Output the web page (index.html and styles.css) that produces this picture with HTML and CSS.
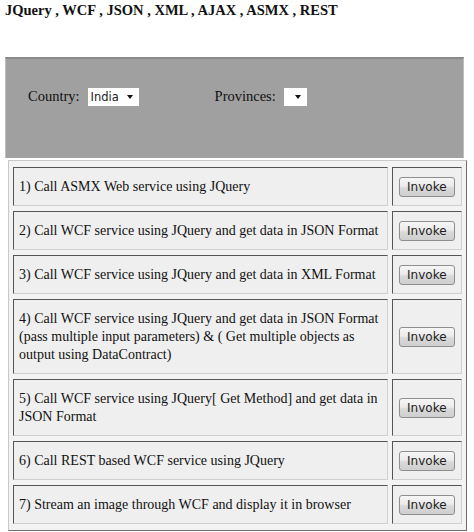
FILE: index.html
```html
<!DOCTYPE html>
<html>
<head>
<meta charset="utf-8">
<link rel="stylesheet" href="styles.css">
</head>
<body>
<h1 class="title">JQuery , WCF , JSON , XML , AJAX , ASMX , REST</h1>
<div class="panel">
  <div class="field">
    <span class="label">Country:</span>
    <span class="select select-country">India <span class="arrow"></span></span>
  </div>
  <div class="field">
    <span class="label">Provinces:</span>
    <span class="select select-prov"><span class="arrow"></span></span>
  </div>
</div>
<table class="services">
  <tr><td class="desc">1) Call ASMX Web service using JQuery</td><td class="act"><span class="btn">Invoke</span></td></tr>
  <tr><td class="desc">2) Call WCF service using JQuery and get data in JSON Format</td><td class="act"><span class="btn">Invoke</span></td></tr>
  <tr><td class="desc">3) Call WCF service using JQuery and get data in XML Format</td><td class="act"><span class="btn">Invoke</span></td></tr>
  <tr><td class="desc">4) Call WCF service using JQuery and get data in JSON Format (pass multiple input parameters) &amp; ( Get multiple objects as output using DataContract)</td><td class="act"><span class="btn">Invoke</span></td></tr>
  <tr><td class="desc">5) Call WCF service using JQuery[ Get Method] and get data in JSON Format</td><td class="act"><span class="btn">Invoke</span></td></tr>
  <tr><td class="desc">6) Call REST based WCF service using JQuery</td><td class="act"><span class="btn">Invoke</span></td></tr>
  <tr><td class="desc">7) Stream an image through WCF and display it in browser</td><td class="act"><span class="btn">Invoke</span></td></tr>
</table>
</body>
</html>
```
FILE: styles.css
```css
html, body {
  margin: 0;
  padding: 0;
  background: #ffffff;
}
body {
  padding: 0 5px;
  font-family: "Liberation Serif", "Times New Roman", serif;
  color: #111;
}
.title {
  margin: 0;
  padding-top: 1px;
  font-size: 14.5px;
  line-height: 18px;
  font-weight: bold;
}
.panel {
  margin-top: 38px;
  width: 459px;
  height: 101px;
  box-sizing: border-box;
  background: #a0a0a0;
  border-top: 2px solid #8a8a8a;
  border-left: 1px solid #bdbdbd;
  border-right: 1px solid #bdbdbd;
  display: flex;
  align-items: center;
  padding: 0 0 24px 22px;
  gap: 76px;
}
.field {
  display: flex;
  align-items: center;
  gap: 8px;
}
.label {
  font-size: 14.5px;
}
.select {
  display: inline-flex;
  align-items: center;
  background: #fff;
  height: 18px;
  box-sizing: border-box;
  font-family: "DejaVu Sans", Tahoma, sans-serif;
  font-size: 11.5px;
  color: #222;
}
.select-country {
  width: 51px;
  padding-left: 3px;
  gap: 8px;
}
.select-prov {
  width: 23px;
  justify-content: flex-end;
  padding-right: 6px;
}
.arrow {
  width: 0;
  height: 0;
  border-left: 3.5px solid transparent;
  border-right: 3.5px solid transparent;
  border-top: 4px solid #111;
  margin-top: 1px;
}
.services {
  margin: 2px 0 0 3px;
  width: 459px;
  border-collapse: separate;
  border-spacing: 4px 5px;
  background: #f3f3f3;
  border: 1px solid;
  border-color: #c8c8c8 #6e6e6e #6e6e6e #c8c8c8;
  padding: 1px 0;
}
.services td {
  background: #efefef;
  border: 1px solid;
  border-color: #555 #d0d0d0 #d0d0d0 #555;
  font-size: 14px;
  line-height: 18px;
}
.desc {
  width: 365px;
  padding: 10px 1px 9px 5px;
}
.act {
  width: 56px;
  padding: 0 6px;
  text-align: center;
}
.btn {
  display: inline-block;
  width: 56px;
  height: 20px;
  box-sizing: border-box;
  border: 1px solid #8e8e8e;
  border-radius: 3px;
  background: linear-gradient(#f6f6f6 0%, #ebebeb 45%, #d9d9d9 55%, #cfcfcf 100%);
  font-family: "DejaVu Sans", Tahoma, sans-serif;
  font-size: 12px;
  line-height: 18px;
  color: #222;
  text-align: center;
  vertical-align: middle;
}
```
